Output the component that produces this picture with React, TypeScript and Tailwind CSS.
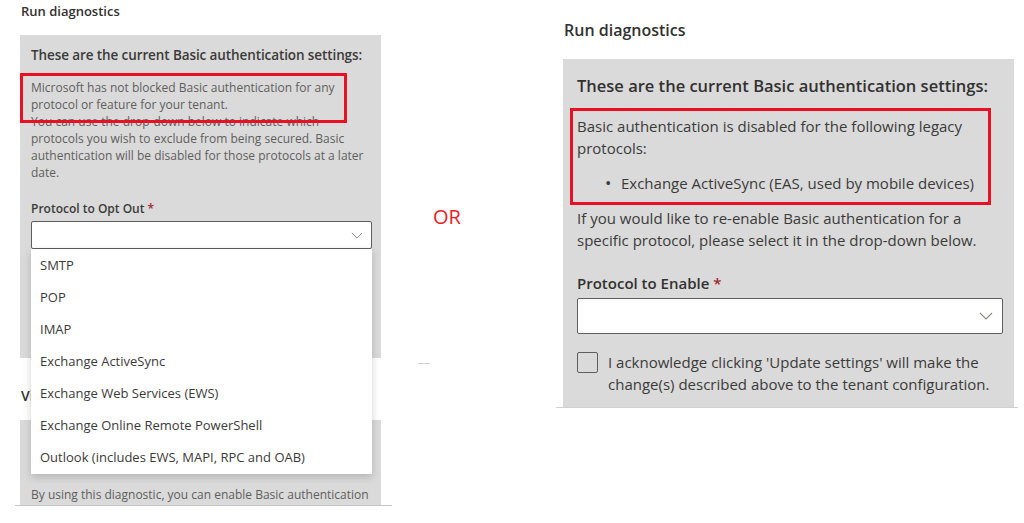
import React from "react";

const font = { fontFamily: '"Segoe UI", "Open Sans", "Noto Sans", sans-serif' };

function Chevron({ className }: { className?: string }) {
  return (
    <svg viewBox="0 0 14 8" className={className} fill="none" stroke="#8a8886" strokeWidth="1.1">
      <path d="M1 1l6 6 6-6" />
    </svg>
  );
}

const protocols = [
  "SMTP",
  "POP",
  "IMAP",
  "Exchange ActiveSync",
  "Exchange Web Services (EWS)",
  "Exchange Online Remote PowerShell",
  "Outlook (includes EWS, MAPI, RPC and OAB)",
];

function OptOutPanel() {
  return (
    <div className="w-[400px] shrink-0">
      <div className="pl-[21px] pt-[3px] text-[13px] leading-[16px] font-semibold text-[#323130]">Run diagnostics</div>

      {/* first settings card */}
      <div className="relative ml-[20px] mt-[16px] h-[323px] w-[361px] bg-[#dadada] pl-[11px] pr-[9px] pt-[10px]">
        <div className="whitespace-nowrap text-[13.5px] leading-[20px] font-semibold tracking-[-0.1px] text-[#3b3a39]">
          These are the current Basic authentication settings:
        </div>
        <p className="mt-[14px] text-[12px] leading-[17px] text-[#605e5c]">
          Microsoft has not blocked Basic authentication for any protocol or feature for your tenant.
          <br />
          You can use the drop-down below to indicate which protocols you wish to exclude from being secured. Basic
          authentication will be disabled for those protocols at a later date.
        </p>
        <div className="mt-[19px] text-[12px] leading-[17px] font-semibold text-[#3b3a39]">
          Protocol to Opt Out <span className="text-[#a4262c]">*</span>
        </div>
        <div className="relative z-20 mt-[4px]">
          <div className="flex h-[28px] items-center justify-end rounded-[2px] border border-[#605e5c] bg-white pr-[8px]">
            <Chevron className="h-[7px] w-[12px]" />
          </div>
          <ul className="absolute left-0 top-full w-full bg-white pt-[1px] shadow-[0_3px_8px_rgba(0,0,0,0.18)]">
            {protocols.map((p) => (
              <li key={p} className="flex h-[32px] items-center px-[9px] text-[13px] text-[#3b3a39]">
                {p}
              </li>
            ))}
          </ul>
        </div>
        {/* highlight annotation */}
        <div className="pointer-events-none absolute left-0 top-[38px] h-[50px] w-[327px] border-[3px] border-[#e81123]" />
      </div>

      <div className="mt-[28px] pl-[21px] text-[14px] leading-[20px] font-semibold text-[#323130]">View</div>

      <div className="ml-[20px] mt-[14px] h-[85px] w-[361px] bg-[#dadada] pl-[11px] pt-[66px]">
        <p className="whitespace-nowrap text-[12px] leading-[17px] text-[#605e5c]">
          By using this diagnostic, you can enable Basic authentication
        </p>
      </div>
      <div className="ml-[15px] h-px w-[377px] bg-[#c8c6c4]" />
    </div>
  );
}

function EnablePanel() {
  return (
    <div className="w-[468px] shrink-0">
      <div className="pl-[8px] pt-[20px] text-[16px] leading-[20px] font-semibold text-[#323130]">Run diagnostics</div>

      <div className="relative ml-[7px] mt-[19px] h-[348px] w-[451px] bg-[#dadada] px-[14px] pt-[15px] text-[#3b3a39]">
        <div className="whitespace-nowrap text-[16.5px] leading-[24px] font-semibold text-[#323130]">
          These are the current Basic authentication settings:
        </div>
        <p className="mt-[17px] text-[15px] leading-[22px]">
          Basic authentication is disabled for the following legacy protocols:
        </p>
        <div className="mt-[13px] flex text-[15px] leading-[22px]">
          <span className="w-[44px] pl-[28px] text-[17px]">•</span>
          <span>Exchange ActiveSync (EAS, used by mobile devices)</span>
        </div>
        <p className="mt-[13px] text-[15px] leading-[22px]">
          If you would like to re-enable Basic authentication for a specific protocol, please select it in the
          drop-down below.
        </p>
        <div className="mt-[21px] text-[15px] leading-[22px] font-semibold text-[#323130]">
          Protocol to Enable <span className="text-[#a4262c]">*</span>
        </div>
        <div className="mt-[4px] flex h-[36px] w-[426px] items-center justify-end rounded-[2px] border border-[#605e5c] bg-white pr-[9px]">
          <Chevron className="h-[8px] w-[14px]" />
        </div>
        <label className="mt-[18px] flex gap-[10px]">
          <span className="h-[21px] w-[21px] shrink-0 rounded-[2px] border border-[#605e5c] bg-[#dadada]" />
          <span className="-mt-[1px] text-[15px] leading-[22px]">
            I acknowledge clicking 'Update settings' will make the change(s) described above to the tenant
            configuration.
          </span>
        </label>
        {/* highlight annotation */}
        <div className="pointer-events-none absolute left-[7px] top-[49px] h-[97px] w-[421px] border-[3px] border-[#e81123]" />
      </div>
      <div className="h-px w-[462px] bg-[#d2d0ce]" />
    </div>
  );
}

export default function App() {
  return (
    <div className="flex h-[523px] w-[1024px] overflow-hidden bg-white" style={font}>
      <OptOutPanel />
      <div className="w-[156px] shrink-0 pt-[204px]">
        <div className="pl-[33px] text-[20px] leading-[26px] text-[#ed1c24]">OR</div>
        <div className="ml-[18px] mt-[133px] h-px w-[12px] bg-[#d0d0d0]" />
      </div>
      <EnablePanel />
    </div>
  );
}
